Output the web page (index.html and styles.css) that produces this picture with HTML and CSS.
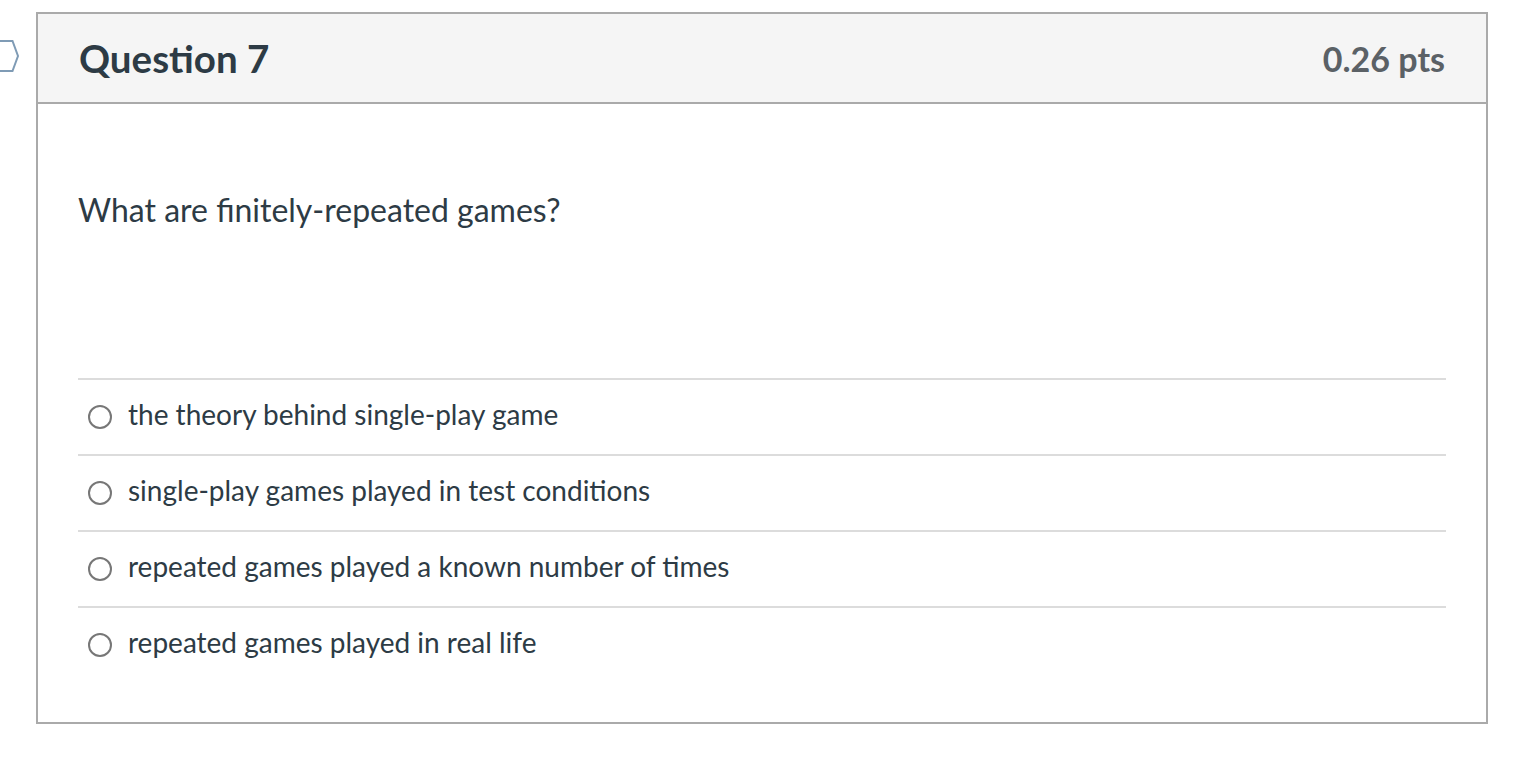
FILE: index.html
```html
<!DOCTYPE html>
<html>
<head>
<meta charset="utf-8">
<link rel="stylesheet" href="styles.css">
</head>
<body>
<div class="page">
  <div class="flag">
    <svg width="20" height="34" viewBox="0 0 20 34"><path d="M-4 1 H12.5 L18 16 L12.5 31 H-4" fill="none" stroke="#7f9bb5" stroke-width="2"/></svg>
  </div>
  <div class="question">
    <div class="q-header">
      <h2 class="q-title">Question 7</h2>
      <div class="q-points">0.26 pts</div>
    </div>
    <div class="q-body">
      <p class="q-text">What are finitely-repeated games?</p>
      <ul class="answers">
        <li class="answer"><span class="radio"></span><span class="label">the theory behind single-play game</span></li>
        <li class="answer"><span class="radio"></span><span class="label">single-play games played in test conditions</span></li>
        <li class="answer"><span class="radio"></span><span class="label">repeated games played a known number of times</span></li>
        <li class="answer"><span class="radio"></span><span class="label">repeated games played in real life</span></li>
      </ul>
    </div>
  </div>
</div>
</body>
</html>
```
FILE: styles.css
```css
html, body {
  margin: 0;
  padding: 0;
  background: #fff;
}
body {
  font-family: Lato, "Open Sans", sans-serif;
  color: #2d3b45;
}
.page {
  position: relative;
  padding: 12px 0 0 36px;
}
.flag {
  position: absolute;
  left: 0;
  top: 40px;
  line-height: 0;
}
.question {
  width: 1448px;
  border: 2px solid #aaaaaa;
}
.q-header {
  height: 88px;
  background: #f5f5f5;
  border-bottom: 2px solid #aaaaaa;
  display: flex;
  align-items: center;
  justify-content: space-between;
  padding: 0 41px;
}
.q-title {
  margin: 0;
  font-size: 38.5px;
  font-weight: 700;
  color: #2d3b45;
}
.q-points {
  font-size: 34px;
  font-weight: 700;
  color: #5b6166;
}
.q-body {
  padding: 85px 40px 40px 40px;
}
.q-text {
  margin: 0 0 147px 0;
  font-size: 32px;
  line-height: 42px;
}
.answers {
  list-style: none;
  margin: 0;
  padding: 0;
}
.answer {
  border-top: 2px solid #dcdcdc;
  height: 74px;
  display: flex;
  align-items: center;
  padding-left: 10px;
}
.radio {
  width: 20px;
  height: 20px;
  border: 2px solid #777;
  border-radius: 50%;
  margin-right: 16px;
  flex: none;
}
.label {
  font-size: 28px;
  line-height: 34px;
  margin-bottom: 6px;
  color: #2d3b45;
}
```
